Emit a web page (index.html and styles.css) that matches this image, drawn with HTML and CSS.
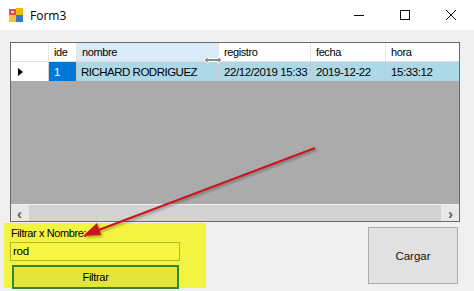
FILE: index.html
```html
<!DOCTYPE html>
<html>
<head>
<meta charset="utf-8">
<link rel="stylesheet" href="styles.css">
</head>
<body>
<div class="window">
  <div class="titlebar">
    <svg class="appicon" width="16" height="16" viewBox="0 0 16 16">
      <rect x="1" y="2" width="7" height="6" fill="#d9534f"/>
      <rect x="8" y="1" width="7" height="7" fill="#f5b800"/>
      <rect x="1" y="8" width="7" height="7" fill="#f0c040"/>
      <rect x="8" y="8" width="7" height="7" fill="#3c78c8"/>
      <rect x="3" y="4" width="3" height="2" fill="#fff" opacity="0.7"/>
    </svg>
    <span class="title">Form3</span>
    <div class="controls">
      <svg width="46" height="30" viewBox="0 0 46 30"><line x1="18" y1="15.5" x2="28" y2="15.5" stroke="#111" stroke-width="1"/></svg>
      <svg width="46" height="30" viewBox="0 0 46 30"><rect x="18.5" y="10.5" width="9" height="9" fill="none" stroke="#111" stroke-width="1"/></svg>
      <svg width="46" height="30" viewBox="0 0 46 30"><path d="M18 10 L28 20 M28 10 L18 20" stroke="#111" stroke-width="1"/></svg>
    </div>
  </div>
  <div class="client">
    <div class="grid">
      <div class="hrow">
        <div class="c c0"></div>
        <div class="c c1">ide</div>
        <div class="c c2 hot">nombre</div>
        <div class="c c3">registro</div>
        <div class="c c4">fecha</div>
        <div class="c c5">hora</div>
      </div>
      <div class="drow">
        <div class="c c0"><span class="tri"></span></div>
        <div class="c c1 sel">1</div>
        <div class="c c2">RICHARD RODRIGUEZ</div>
        <div class="c c3">22/12/2019 15:33</div>
        <div class="c c4">2019-12-22</div>
        <div class="c c5">15:33:12</div>
      </div>
      <div class="empty"></div>
      <div class="hscroll">
        <div class="sbtn">&#8249;</div>
        <div class="thumb"></div>
        <div class="sbtn">&#8250;</div>
      </div>
    </div>
    <div class="bottom">
      <div class="filter">
        <div class="lbl">Filtrar x Nombre:</div>
        <div class="tb">rod</div>
        <div class="fbtn">Filtrar</div>
      </div>
      <div class="cargar">Cargar</div>
    </div>
  </div>
  <svg class="cursor" width="20" height="10" viewBox="0 0 20 10">
    <path d="M1 5 L5 1.5 L5 3.5 L15 3.5 L15 1.5 L19 5 L15 8.5 L15 6.5 L5 6.5 L5 8.5 Z" fill="#8a8a8a" stroke="#fff" stroke-width="1"/>
  </svg>
  <svg class="arrow" width="474" height="291" viewBox="0 0 474 291">
    <defs>
      <filter id="sh" x="-10%" y="-10%" width="120%" height="120%">
        <feDropShadow dx="1.5" dy="1.5" stdDeviation="1" flood-color="#000" flood-opacity="0.35"/>
      </filter>
    </defs>
    <g filter="url(#sh)">
      <line x1="315" y1="148" x2="96" y2="231" stroke="#c8171e" stroke-width="2"/>
      <path d="M83 236 L97 223 L101 235 Z" fill="#c8171e"/>
    </g>
  </svg>
</div>
</body>
</html>
```
FILE: styles.css
```css
* { box-sizing: border-box; }
html, body { margin: 0; padding: 0; }
body {
  width: 474px;
  height: 291px;
  overflow: hidden;
  font-family: "Liberation Sans", Arial, sans-serif;
  font-size: 11px;
  color: #000;
  background: #f0f0f0;
}
.window {
  position: relative;
  width: 474px;
  height: 291px;
  display: flex;
  flex-direction: column;
}
.titlebar {
  height: 30px;
  background: #fff;
  display: flex;
  align-items: center;
  padding-left: 8px;
}
.appicon { margin-right: 6px; }
.title {
  font-family: "Open Sans", "Noto Sans", sans-serif;
  font-size: 12px;
  color: #000;
}
.controls {
  margin-left: auto;
  display: flex;
  height: 30px;
}
.client {
  flex: 1;
  background: #f0f0f0;
  padding: 12px 0 0 10px;
}
.grid {
  width: 450px;
  height: 180px;
  border: 1px solid #696969;
  background: #ababab;
  display: flex;
  flex-direction: column;
}
.hrow, .drow { display: flex; }
.hrow { height: 18px; background: #fff; }
.drow { height: 20px; }
.c {
  display: flex;
  align-items: center;
  padding-left: 5px;
  white-space: nowrap;
  overflow: hidden;
  letter-spacing: -0.4px;
  font-size: 11px;
}
.c0 { width: 38px; }
.c1 { width: 28px; }
.c2 { width: 142px; }
.c3 { width: 92px; }
.c4 { width: 75px; }
.c5 { flex: 1; }
.hrow .c { border-right: 1px solid #e5e5e5; }
.hrow .c5 { border-right: none; }
.hrow .hot { background: #d9ebf9; }
.drow .c { background: #add8e6; border-right: 1px solid #c8c8c8; border-top: 1px solid #e0e0e0; font-size: 11.5px; }
.drow .c2 { letter-spacing: -0.5px; padding-left: 4px; }
.drow .c0 { background: #fff; border-right: 1px solid #d0d0d0; }
.drow .c5 { border-right: none; }
.drow .sel { background: #0078d7; color: #fff; }
.tri {
  width: 0; height: 0;
  margin-left: 2px;
  border-top: 4px solid transparent;
  border-bottom: 4px solid transparent;
  border-left: 5px solid #000;
}
.empty { flex: 1; }
.hscroll {
  height: 17px;
  display: flex;
  background: #e8e8e8;
  border-top: 1px solid #f0f0f0;
}
.sbtn {
  width: 17px;
  display: flex;
  align-items: center;
  justify-content: center;
  font-size: 15px;
  font-weight: bold;
  color: #606060;
  line-height: 1;
}
.thumb { flex: 1; background: #d2d2d2; margin: 0 1px; }
.bottom {
  display: flex;
  align-items: flex-start;
}
.filter {
  margin-left: -6px;
  margin-top: 1px;
  width: 202px;
  height: 65px;
  background: #f3f342;
  padding: 3px 0 0 6px;
}
.lbl {
  font-size: 11px;
  height: 14px;
  line-height: 14px;
  letter-spacing: -0.4px;
  padding-left: 1px;
}
.tb {
  width: 170px;
  height: 19px;
  margin-top: 2px;
  border: 1px solid #b9b530;
  background: #f7f743;
  line-height: 17px;
  padding-left: 2px;
  font-size: 11.5px;
  letter-spacing: -0.3px;
}
.fbtn {
  width: 167px;
  height: 24px;
  margin: 4px 0 0 2px;
  border: 2px solid #2f8a2f;
  background: #e4e43a;
  display: flex;
  align-items: center;
  justify-content: center;
  font-size: 11px;
  letter-spacing: -0.3px;
}
.cargar {
  margin-left: auto;
  margin-right: 16px;
  margin-top: 5px;
  width: 90px;
  height: 57px;
  border: 1px solid #adadad;
  background: #e1e1e1;
  display: flex;
  align-items: center;
  justify-content: center;
  font-size: 11.5px;
  color: #111;
}
.cursor {
  position: absolute;
  left: 203px;
  top: 55px;
}
.arrow {
  position: absolute;
  left: 0;
  top: 0;
  pointer-events: none;
}
```
